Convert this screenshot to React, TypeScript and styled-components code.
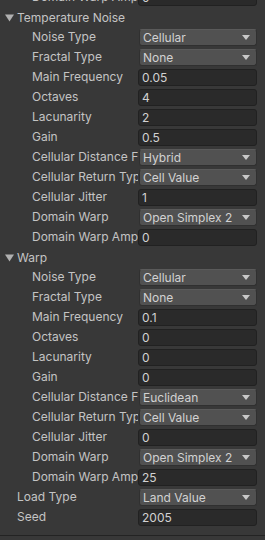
import React from "react";
import styled, { createGlobalStyle } from "styled-components";

const Global = createGlobalStyle`
  html, body { margin: 0; padding: 0; background: #383838; }
  body { font-family: Inter, "Noto Sans", "Liberation Sans", sans-serif; }
`;

const Panel = styled.div`
  width: 265px;
  height: 540px;
  overflow: hidden;
  background: #383838;
  display: flex;
  flex-direction: column;
`;

const List = styled.div`
  display: flex;
  flex-direction: column;
  margin-top: -13px;
  height: 548px;
  flex: none;
`;

const Footer = styled.div`
  flex: 1;
  border-top: 1px solid #232323;
  background: #383838;
`;

const Row = styled.div<{ $indent: number }>`
  height: 20px;
  display: flex;
  align-items: center;
  padding-left: ${(p) => p.$indent}px;
  padding-right: 8px;
  box-sizing: border-box;
`;

const Label = styled.div<{ $indent: number }>`
  width: ${(p) => 138 - p.$indent}px;
  flex: none;
  overflow: hidden;
  white-space: nowrap;
  color: #c4c4c4;
  font-size: 12px;
  line-height: 20px;
`;

const HeaderRow = styled.div`
  height: 20px;
  display: flex;
  align-items: center;
  padding-left: 5px;
  gap: 3px;
  color: #c4c4c4;
  font-size: 12px;
`;

const Arrow = styled.svg`
  width: 9px;
  height: 9px;
  flex: none;
`;

const TextField = styled.div`
  flex: 1;
  height: 17px;
  box-sizing: border-box;
  background: #2a2a2a;
  border: 1px solid #212121;
  border-radius: 3px;
  color: #d2d2d2;
  font-size: 12px;
  line-height: 15px;
  padding-left: 3px;
  white-space: nowrap;
  overflow: hidden;
`;

const Dropdown = styled.div`
  flex: 1;
  height: 17px;
  box-sizing: border-box;
  background: #515151;
  border: 1px solid #303030;
  border-top-color: #5a5a5a;
  border-radius: 3px;
  color: #d2d2d2;
  font-size: 12px;
  line-height: 15px;
  padding-left: 3px;
  padding-right: 6px;
  display: flex;
  align-items: center;
  justify-content: space-between;
  white-space: nowrap;
  overflow: hidden;
  margin-left: 1px;
`;

const Caret = styled.svg`
  width: 8px;
  height: 5px;
  flex: none;
`;

type Field = { label: string; value: string; kind: "text" | "drop" };

const noiseFields = (v: string[]): Field[] => [
  { label: "Noise Type", value: v[0], kind: "drop" },
  { label: "Fractal Type", value: v[1], kind: "drop" },
  { label: "Main Frequency", value: v[2], kind: "text" },
  { label: "Octaves", value: v[3], kind: "text" },
  { label: "Lacunarity", value: v[4], kind: "text" },
  { label: "Gain", value: v[5], kind: "text" },
  { label: "Cellular Distance Function", value: v[6], kind: "drop" },
  { label: "Cellular Return Type", value: v[7], kind: "drop" },
  { label: "Cellular Jitter", value: v[8], kind: "text" },
  { label: "Domain Warp", value: v[9], kind: "drop" },
  { label: "Domain Warp Amp", value: v[10], kind: "text" },
];

const FieldRow = ({ f, indent }: { f: Field; indent: number }) => (
  <Row $indent={indent}>
    <Label $indent={indent}>{f.label}</Label>
    {f.kind === "drop" ? (
      <Dropdown>
        <span>{f.value}</span>
        <Caret viewBox="0 0 8 5">
          <path d="M0 0 L8 0 L4 5 Z" fill="#c8c8c8" />
        </Caret>
      </Dropdown>
    ) : (
      <TextField>{f.value}</TextField>
    )}
  </Row>
);

const Header = ({ title }: { title: string }) => (
  <HeaderRow>
    <Arrow viewBox="0 0 9 9">
      <path d="M0 1.5 L9 1.5 L4.5 8.5 Z" fill="#b0b0b0" />
    </Arrow>
    <span>{title}</span>
  </HeaderRow>
);

export default function App() {
  const temp = noiseFields([
    "Cellular",
    "None",
    "0.05",
    "4",
    "2",
    "0.5",
    "Hybrid",
    "Cell Value",
    "1",
    "Open Simplex 2",
    "0",
  ]);
  const warp = noiseFields([
    "Cellular",
    "None",
    "0.1",
    "0",
    "0",
    "0",
    "Euclidean",
    "Cell Value",
    "0",
    "Open Simplex 2",
    "25",
  ]);
  return (
    <>
      <Global />
      <Panel>
        <List>
          <FieldRow f={{ label: "Domain Warp Amp", value: "0", kind: "text" }} indent={32} />
          <Header title="Temperature Noise" />
          {temp.map((f) => (
            <FieldRow key={"t" + f.label} f={f} indent={32} />
          ))}
          <Header title="Warp" />
          {warp.map((f) => (
            <FieldRow key={"w" + f.label} f={f} indent={32} />
          ))}
          <FieldRow f={{ label: "Load Type", value: "Land Value", kind: "drop" }} indent={17} />
          <FieldRow f={{ label: "Seed", value: "2005", kind: "text" }} indent={17} />
        </List>
        <Footer />
      </Panel>
    </>
  );
}
